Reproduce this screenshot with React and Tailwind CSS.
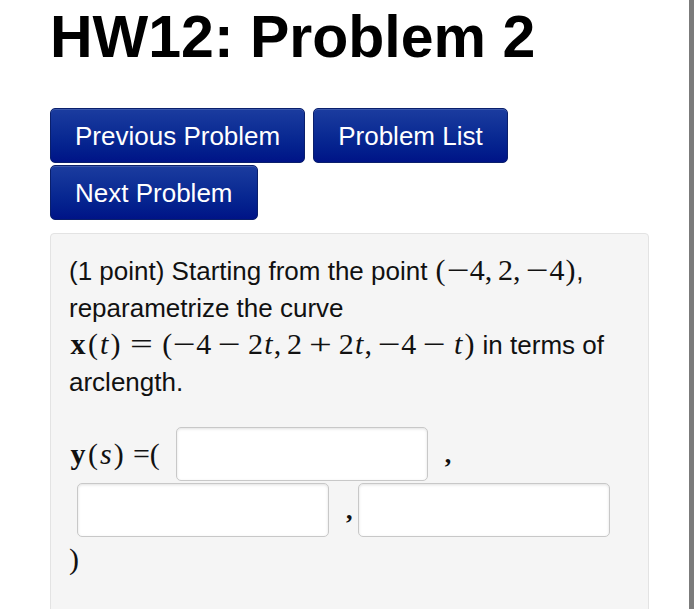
import React from "react";

const sans = "font-['Liberation_Sans',Arial,sans-serif]";
const serif = "font-['Liberation_Serif','Times_New_Roman',serif]";

/* ---------- math bits: Times glyphs set in TeX-sized boxes ---------- */
function M({ children }) {
  return <span className={`${serif} text-[30px] leading-none`}>{children}</span>;
}
const L = () => <span className="inline-block w-[0.389em] text-center">(</span>;
const R = () => <span className="inline-block w-[0.389em] text-center">)</span>;
const T = () => <span className="inline-block w-[0.361em] italic text-center">t</span>;
const S = () => <span className="inline-block w-[0.469em] italic text-center">s</span>;
const Bold = ({ children }) => (
  <span className="inline-block w-[0.607em] font-bold text-center">{children}</span>
);
// wide operator glyph (minus, plus, equals) in a 0.778em box
const Sym = ({ children }) => (
  <span className="inline-block w-[0.778em] text-center">
    <span className="inline-block scale-x-[1.35]">{children}</span>
  </span>
);
const Op = ({ children }) => (
  <span className="mx-[0.222em]">
    <Sym>{children}</Sym>
  </span>
);
const Rel = ({ children }) => (
  <span className="mx-[0.278em]">
    <Sym>{children}</Sym>
  </span>
);
const Comma = () => <span className="inline-block w-[0.278em] mr-[0.167em]">,</span>;

function NavButton({ children }) {
  return (
    <button
      className={`${sans} h-[55px] px-6 rounded-[5px] border border-[#0a1f6c] bg-linear-to-b from-[#1b3c9f] to-[#001387] text-white text-[26px] leading-none shadow-[inset_0_1px_0_rgba(255,255,255,0.15)]`}
    >
      {children}
    </button>
  );
}

function AnswerBox() {
  return (
    <input
      type="text"
      className="w-[252px] h-[54px] rounded-[5px] border border-[#c8c8c8] bg-white shadow-[inset_0_1px_3px_rgba(0,0,0,0.12)] outline-none"
    />
  );
}

export default function App() {
  return (
    <div className="flex h-screen overflow-hidden bg-white">
      <div className="flex-1 pl-[50px] pr-[40px]">
        {/* title */}
        <h1
          className={`${sans} mt-[4px] text-[59px] leading-[66px] font-bold text-black`}
        >
          HW12: Problem 2
        </h1>

        {/* navigation */}
        <div className="mt-[38px] flex flex-wrap gap-x-2 gap-y-[2px] w-[470px]">
          <NavButton>Previous Problem</NavButton>
          <NavButton>Problem List</NavButton>
          <NavButton>Next Problem</NavButton>
        </div>

        {/* problem body */}
        <div
          className={`${sans} mt-[13px] rounded-[4px] border border-[#e3e3e3] bg-[#f5f5f5] pl-[18px] pr-4 pt-[19px] pb-[200px] text-[26px] leading-[37px] text-[#111]`}
        >
          <p>
            (1 point) Starting from the point{" "}
            <M>
              <L />
              <Sym>−</Sym>4<Comma />2<Comma />
              <Sym>−</Sym>4<R />
            </M>
            ,<br />
            reparametrize the curve
            <br />
            <M>
              <Bold>x</Bold>
              <L />
              <T />
              <R />
              <Rel>=</Rel>
              <L />
              <Sym>−</Sym>4<Op>−</Op>2<T />
              <Comma />2<Op>+</Op>2<T />
              <Comma />
              <Sym>−</Sym>4<Op>−</Op>
              <T />
              <R />
            </M>{" "}
            in terms of
            <br />
            arclength.
          </p>

          <div className="mt-[26px] flex flex-col gap-[2px]">
            <div className="flex items-center">
              <span className={`${serif} text-[30px] leading-none`}>
                <Bold>y</Bold>
                <L />
                <S />
                <R />
                <span className="ml-[0.278em]">=(</span>
              </span>
              <span className="ml-[16px]">
                <AnswerBox />
              </span>
              <span className={`${serif} ml-[17px] text-[26px] font-bold`}>,</span>
            </div>
            <div className="flex items-center pl-[8px]">
              <AnswerBox />
              <span className={`${serif} ml-[17px] text-[26px] font-bold`}>,</span>
              <span className="ml-[5px]">
                <AnswerBox />
              </span>
            </div>
            <div className={`${serif} text-[30px] leading-[40px]`}>)</div>
          </div>
        </div>
      </div>

      {/* right edge bar */}
      <div className="w-[5px] bg-[#7b7b7b]" />
      <div className="w-[6px]" />
    </div>
  );
}
